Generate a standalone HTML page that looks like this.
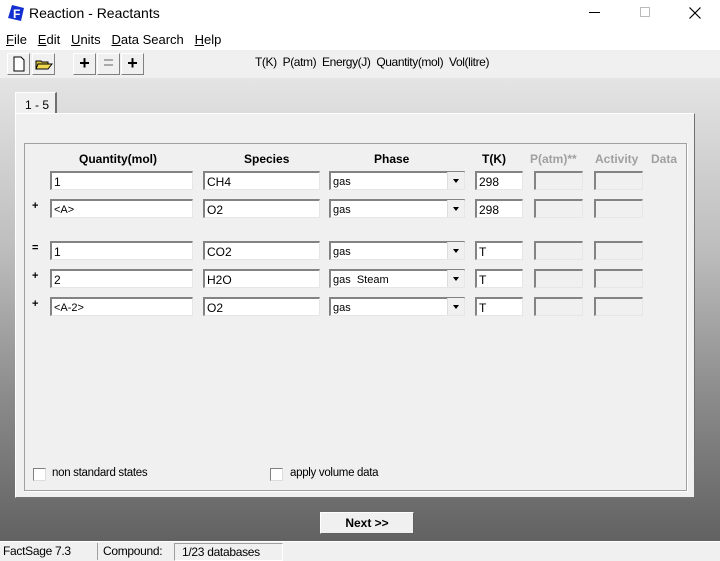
<!DOCTYPE html><html><head><style>
*{box-sizing:border-box;margin:0;padding:0}
body{width:720px;height:561px;overflow:hidden;position:relative;font-family:"Liberation Sans",sans-serif;font-size:12px;color:#000;background:linear-gradient(#e4e4e4 78px,#bdbdbd 250px,#8a8a8a 400px,#626262 540px)}
.a{position:absolute}
.in{position:absolute;height:19px;background:#fff;border-top:2px solid #838383;border-left:2px solid #838383;border-right:1px solid #e6e6e6;border-bottom:1px solid #e6e6e6;font-size:12px;padding:2px 2px 0;line-height:14px}
.dis{background:#f0f0f0}
.arr{position:absolute;right:0;top:-1px;width:17px;height:17px;background:#f0f0f0;border-left:1px solid #ddd}
.arr:after{content:"";position:absolute;left:5px;top:7px;border-left:3.5px solid transparent;border-right:3.5px solid transparent;border-top:4px solid #000}
.h{position:absolute;top:152px;font-weight:bold;font-size:12px}
.sg{position:absolute;left:32px;font-weight:bold;font-size:11px}
.cb{position:absolute;width:13px;height:13px;background:#fff;border-top:1px solid #808080;border-left:1px solid #808080;border-right:1px solid #ddd;border-bottom:1px solid #ddd}
.tb{position:absolute;top:53px;width:23px;height:22px;background:#f0f0f0;border:1px solid;border-color:#fff #808080 #808080 #fff;font-weight:bold;font-size:18px;text-align:center;line-height:19px}
</style></head><body>
<div class="a" style="left:0;top:0;width:720px;height:50px;background:#fff"></div>
<svg class="a" style="left:7px;top:4px" width="18" height="18" viewBox="0 0 18 18"><polygon points="5,1 17,4 14,17 1,14" fill="#1530d0"/><text x="6" y="14" font-size="12" font-weight="bold" fill="#fff" font-family="Liberation Sans">F</text></svg>
<div class="a" style="left:29px;top:5px;font-size:14px">Reaction - Reactants</div>
<div class="a" style="left:589px;top:12px;width:11px;height:1px;background:#000"></div>
<div class="a" style="left:640px;top:7px;width:10px;height:10px;border:1px solid #bbb"></div>
<svg class="a" style="left:689px;top:7px" width="12" height="12" viewBox="0 0 12 12"><path d="M0.5 0.5L11.5 11.5M11.5 0.5L0.5 11.5" stroke="#000" stroke-width="1.2"/></svg>
<div class="a" style="left:6px;top:32px;font-size:13px"><u>F</u>ile&nbsp;&nbsp;&nbsp;<u>E</u>dit&nbsp;&nbsp;&nbsp;<u>U</u>nits&nbsp;&nbsp;&nbsp;<u>D</u>ata Search&nbsp;&nbsp;&nbsp;<u>H</u>elp</div>
<div class="a" style="left:0;top:50px;width:720px;height:28px;background:#f0f0f0"></div>
<div class="tb" style="left:7px"><svg width="14" height="16" viewBox="0 0 14 16" style="margin-top:2px"><path d="M2 1H9L12 4V15H2Z" fill="#fff" stroke="#000"/></svg></div>
<div class="tb" style="left:32px"><svg width="18" height="14" viewBox="0 0 18 14" style="margin-top:3px"><path d="M1 4H6L7 5H13V12H1Z" fill="#d8c040" stroke="#000"/><path d="M3 7H17L13 12H1Z" fill="#f0d850" stroke="#000"/></svg></div>
<div class="tb" style="left:73px">+</div>
<div class="tb" style="left:97px;color:#aaa">=</div>
<div class="tb" style="left:121px">+</div>
<div class="a" style="left:255px;top:55px;font-size:12px;letter-spacing:-0.4px">T(K)&nbsp; P(atm)&nbsp; Energy(J)&nbsp; Quantity(mol)&nbsp; Vol(litre)</div>
<div class="a" style="left:15px;top:92px;width:42px;height:23px;background:#f0f0f0;border-top:1px solid #fff;border-left:1px solid #fff;border-right:2px solid #707070;padding:5px 0 0 9px">1 - 5</div>
<div class="a" style="left:15px;top:113px;width:680px;height:385px;background:#f0f0f0;border:1px solid;border-color:#fff #707070 #707070 #fff"></div>
<div class="a" style="left:24px;top:143px;width:663px;height:348px;border:1px solid #a0a0a0;box-shadow:1px 1px 0 #fff"></div>
<div class="h" style="left:79px">Quantity(mol)</div>
<div class="h" style="left:244px">Species</div>
<div class="h" style="left:374px">Phase</div>
<div class="h" style="left:482px">T(K)</div>
<div class="h" style="left:530px;color:#a0a0a0">P(atm)**</div>
<div class="h" style="left:595px;color:#a0a0a0">Activity</div>
<div class="h" style="left:651px;color:#a0a0a0">Data</div>

<div class="in" style="left:50px;top:171px;width:143px">1</div><div class="in" style="left:203px;top:171px;width:117px">CH4</div><div class="in" style="left:329px;top:171px;width:136px;font-size:11px">gas<div class="arr"></div></div><div class="in" style="left:475px;top:171px;width:48px">298</div><div class="in dis" style="left:534px;top:171px;width:49px"></div><div class="in dis" style="left:594px;top:171px;width:49px"></div>
<div class="sg" style="top:200px">+</div>
<div class="in" style="left:50px;top:199px;width:143px;font-size:11px">&lt;A&gt;</div><div class="in" style="left:203px;top:199px;width:117px">O2</div><div class="in" style="left:329px;top:199px;width:136px;font-size:11px">gas<div class="arr"></div></div><div class="in" style="left:475px;top:199px;width:48px">298</div><div class="in dis" style="left:534px;top:199px;width:49px"></div><div class="in dis" style="left:594px;top:199px;width:49px"></div>
<div class="sg" style="top:242px">=</div>
<div class="in" style="left:50px;top:241px;width:143px">1</div><div class="in" style="left:203px;top:241px;width:117px">CO2</div><div class="in" style="left:329px;top:241px;width:136px;font-size:11px">gas<div class="arr"></div></div><div class="in" style="left:475px;top:241px;width:48px">T</div><div class="in dis" style="left:534px;top:241px;width:49px"></div><div class="in dis" style="left:594px;top:241px;width:49px"></div>
<div class="sg" style="top:270px">+</div>
<div class="in" style="left:50px;top:269px;width:143px">2</div><div class="in" style="left:203px;top:269px;width:117px">H2O</div><div class="in" style="left:329px;top:269px;width:136px;font-size:11px">gas&nbsp; Steam<div class="arr"></div></div><div class="in" style="left:475px;top:269px;width:48px">T</div><div class="in dis" style="left:534px;top:269px;width:49px"></div><div class="in dis" style="left:594px;top:269px;width:49px"></div>
<div class="sg" style="top:298px">+</div>
<div class="in" style="left:50px;top:297px;width:143px;font-size:11px">&lt;A-2&gt;</div><div class="in" style="left:203px;top:297px;width:117px">O2</div><div class="in" style="left:329px;top:297px;width:136px;font-size:11px">gas<div class="arr"></div></div><div class="in" style="left:475px;top:297px;width:48px">T</div><div class="in dis" style="left:534px;top:297px;width:49px"></div><div class="in dis" style="left:594px;top:297px;width:49px"></div>

<div class="cb" style="left:33px;top:468px"></div><div class="a" style="left:52px;top:467px;font-size:11.5px;letter-spacing:-0.3px">non standard states</div>
<div class="cb" style="left:270px;top:468px"></div><div class="a" style="left:290px;top:467px;font-size:11.5px;letter-spacing:-0.3px">apply volume data</div>
<div class="a" style="left:320px;top:512px;width:94px;height:22px;background:#f0f0f0;border:1px solid;border-color:#fff #606060 #606060 #fff;font-weight:bold;text-align:center;line-height:20px">Next &gt;&gt;</div>
<div class="a" style="left:0;top:541px;width:720px;height:20px;background:#f0f0f0;border-top:1px solid #fff"></div>
<div class="a" style="left:3px;top:544px;font-size:12px;letter-spacing:-0.3px">FactSage 7.3</div>
<div class="a" style="left:97px;top:543px;width:1px;height:17px;background:#a0a0a0"></div>
<div class="a" style="left:103px;top:544px;font-size:12px;letter-spacing:-0.3px">Compound:</div>
<div class="a" style="left:174px;top:543px;width:109px;height:18px;border:1px solid;border-color:#a0a0a0 #fff #fff #a0a0a0;padding:1px 0 0 7px;font-size:12px;letter-spacing:-0.3px">1/23 databases</div>
</body></html>
